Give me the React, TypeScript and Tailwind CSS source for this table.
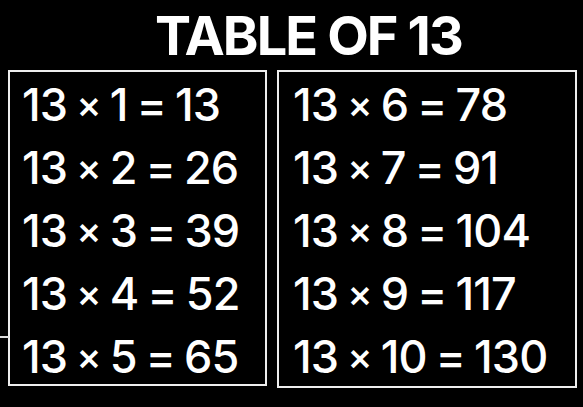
import React from 'react';

const left = [1, 2, 3, 4, 5];
const right = [6, 7, 8, 9, 10];

function Row({ n }: { n: number }) {
  return (
    <div className="h-[63px] leading-[63px] whitespace-nowrap tracking-[-0.02em] [word-spacing:-2px]">
      13 <span className="inline-block text-[38px] -translate-y-[3px]">×</span> {n} = {13 * n}
    </div>
  );
}

export default function App() {
  return (
    <div className="relative w-[583px] h-[407px] bg-black text-white overflow-hidden font-['Inter',sans-serif]">
      {/* title */}
      <div className="h-[70px] pt-[8px] pl-[34px] text-center">
        <h1 className="text-[54px] leading-[55px] font-bold tracking-[-0.035em]">TABLE OF 13</h1>
      </div>

      <div className="flex gap-[10px] pl-[8px]">
        <div className="w-[259px] h-[316px] border-2 border-[#eeeeee] pl-[12px] pt-[1px] text-[45px] font-medium">
          {left.map(n => <Row key={n} n={n} />)}
        </div>
        <div className="w-[300px] h-[318px] border-2 border-[#eeeeee] pl-[14px] pt-[1px] text-[45px] font-medium">
          {right.map(n => <Row key={n} n={n} />)}
        </div>
      </div>

      {/* stray line at left edge */}
      <div className="absolute left-0 top-[336px] w-[9px] h-[2px] bg-[#dddddd]" />
    </div>
  );
}
